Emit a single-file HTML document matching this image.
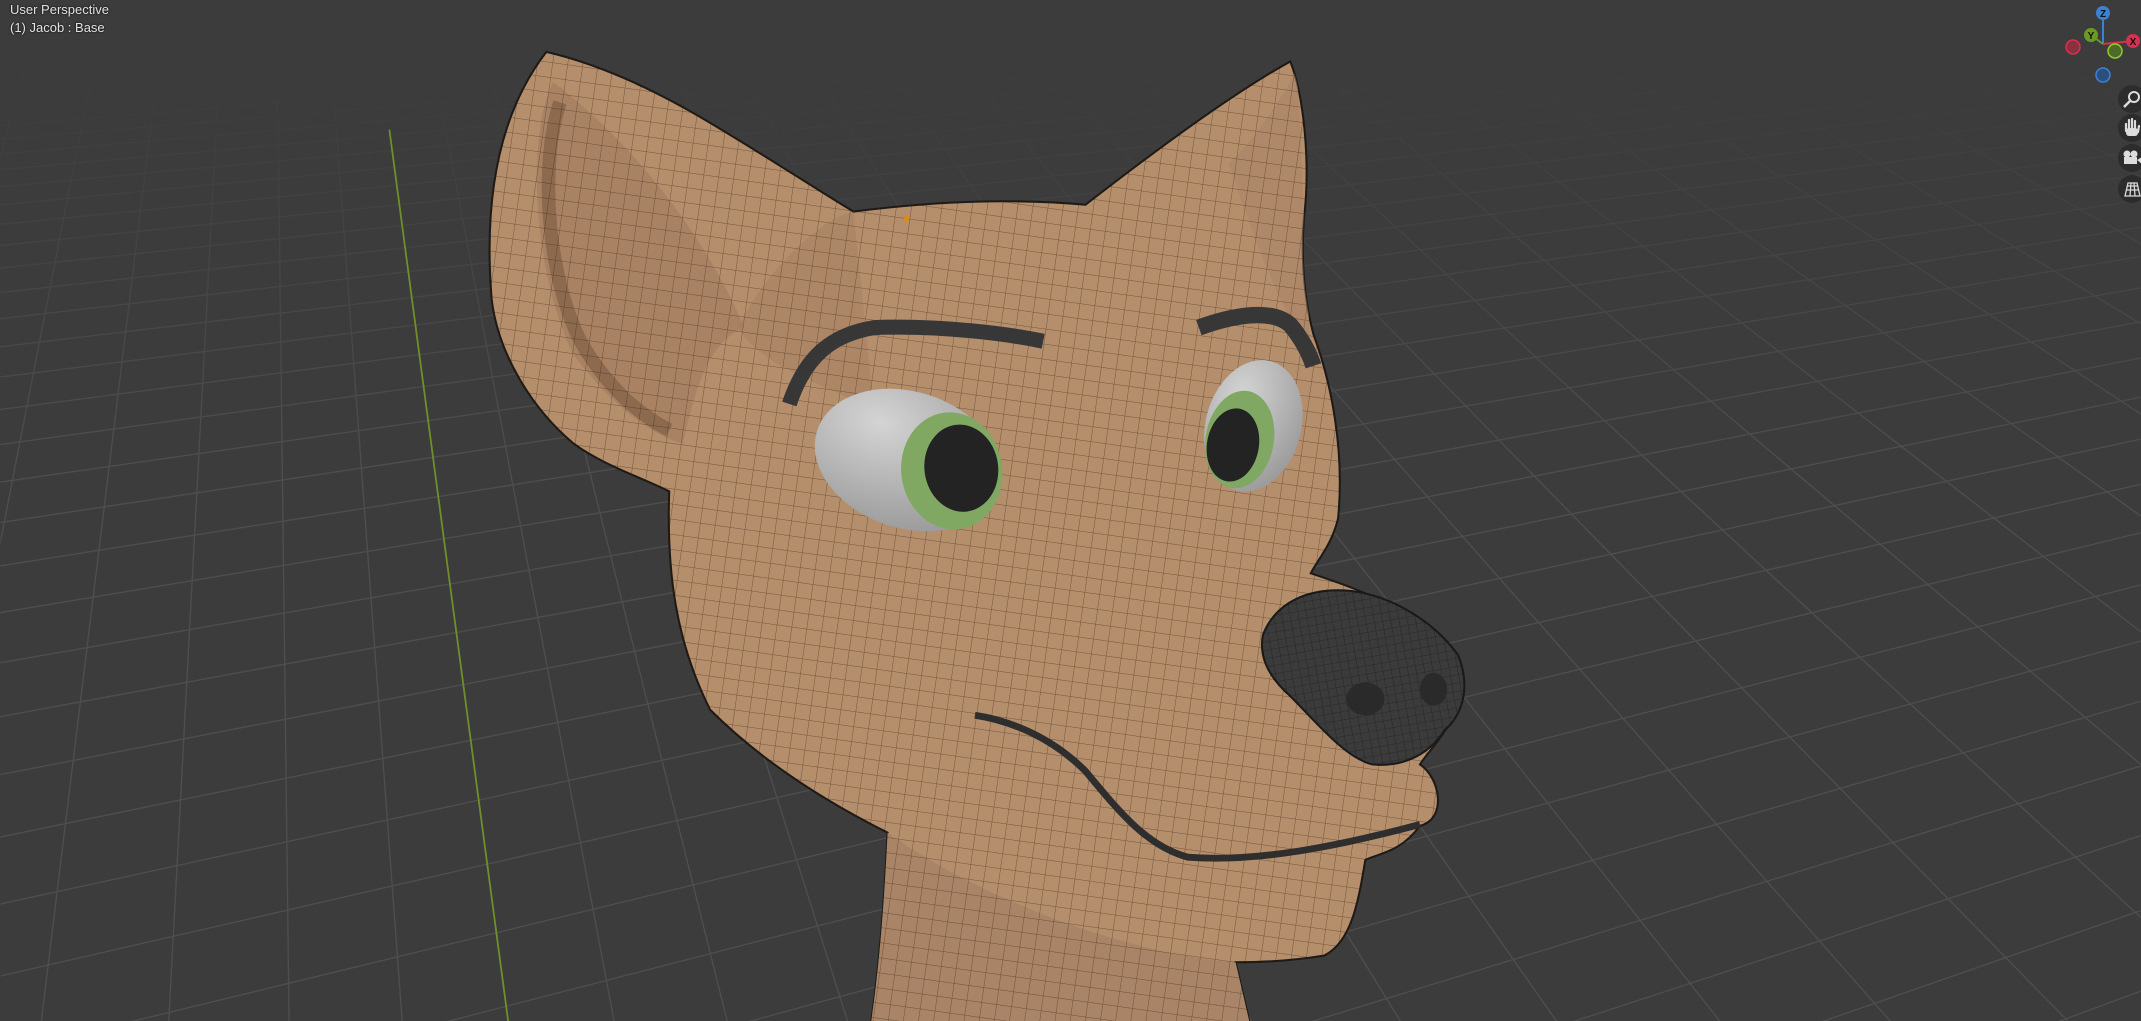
<!DOCTYPE html>
<html><head><meta charset="utf-8">
<style>
html,body{margin:0;padding:0;background:#3c3c3c;overflow:hidden;width:2141px;height:1021px}
#wrap{position:relative;width:2141px;height:1021px;overflow:hidden;background:#3c3c3c}
svg{position:absolute;left:0;top:0;display:block}
.t{position:absolute;left:10px;color:#e2e2e2;font:13px "Liberation Sans",sans-serif;text-shadow:0 0 2px #000}
</style></head><body><div id="wrap">
<svg width="2141" height="1021" viewBox="0 0 1568 748" id="s">
<defs>
<pattern id="mesh" width="11" height="11" patternUnits="userSpaceOnUse" patternTransform="rotate(8)">
<path d="M0 0H11M0 0V11" stroke="#2a1a10" stroke-opacity="0.5" stroke-width="0.7" fill="none"/>
</pattern>
<pattern id="mesh2" width="6" height="6" patternUnits="userSpaceOnUse" patternTransform="rotate(-10)">
<path d="M0 0H6M0 0V6" stroke="#111" stroke-opacity="0.6" stroke-width="0.6" fill="none"/>
</pattern>
<radialGradient id="skin" cx="0.55" cy="0.45" r="0.65">
<stop offset="0" stop-color="#c49d7b"/><stop offset="0.7" stop-color="#b58e6c"/><stop offset="1" stop-color="#93705300"/>
</radialGradient>
<radialGradient id="eyeW" cx="0.3" cy="0.3" r="0.8">
<stop offset="0" stop-color="#d4d4d4"/><stop offset="1" stop-color="#9a9a9a"/>
</radialGradient>
<linearGradient id="fade" x1="0" y1="0" x2="0" y2="1">
<stop offset="0" stop-color="#fff" stop-opacity="0"/><stop offset="0.12" stop-color="#fff" stop-opacity="0.15"/><stop offset="0.45" stop-color="#fff" stop-opacity="1"/><stop offset="1" stop-color="#fff" stop-opacity="1"/>
</linearGradient>
<mask id="gm"><rect x="0" y="0" width="1568" height="748" fill="url(#fade)"/></mask>
<clipPath id="hc"><path id="headp" d="M400,38 C430,45 470,60 520,90 C570,120 600,140 625,155 C680,148 740,145 795,150 C840,115 900,70 945,45 C955,70 960,120 955,160 C952,200 958,230 962,245 C975,280 985,330 980,380 C975,400 965,410 960,420 C990,430 1020,440 1060,470 L1072,500 C1068,530 1050,545 1040,560 C1055,570 1060,600 1040,605 C1025,625 1010,625 1000,630 C995,660 990,690 970,700 C940,705 915,705 905,705 L915,748 L638,748 C645,700 648,650 650,610 C610,590 560,560 520,520 C495,470 488,420 490,360 C470,350 440,340 420,325 C390,300 365,260 360,220 C355,160 360,90 400,38 Z"/></clipPath>
</defs>
<g id="grid" stroke="#4e4e4e" stroke-width="1" fill="none" mask="url(#gm)"></g>
<line x1="285" y1="95" x2="372" y2="748" stroke="#6e8f2c" stroke-width="1.3"/>
<g>
<use href="#headp" fill="#b58e6c" stroke="#1e1a16" stroke-width="1.5"/>
<g clip-path="url(#hc)">
<path d="M405,60 C385,100 390,200 420,260 C450,300 480,320 500,325 C510,280 520,250 545,240 C520,180 470,110 405,60 Z" fill="#a88263"/>
<path d="M410,75 C395,120 400,200 425,250 C445,285 470,305 490,315" stroke="#8d6a4d" stroke-width="10" fill="none"/>
<path d="M650,610 C720,660 830,700 905,705 L915,748 L638,748 Z" fill="#a98466"/>
<path d="M900,120 C930,90 945,60 950,50 L960,260 C940,230 920,180 900,120Z" fill="#a88263" opacity="0.5"/>
<path d="M540,240 C560,200 600,160 625,155 L640,300 C600,280 560,270 540,240Z" fill="#a17b5d" opacity="0.4"/>
<rect x="0" y="0" width="1568" height="748" fill="url(#mesh)"/>
</g>
</g>
<path d="M578,296 C590,260 610,245 640,240 C690,238 740,245 764,250" stroke="#373737" stroke-width="11" fill="none"/>
<path d="M878,240 C900,232 930,225 945,238 C955,250 960,262 962,268" stroke="#373737" stroke-width="12" fill="none"/>
<ellipse cx="665" cy="337" rx="70" ry="50" transform="rotate(18 665 337)" fill="url(#eyeW)"/>
<ellipse cx="697" cy="345" rx="37" ry="43" transform="rotate(-8 697 345)" fill="#80a862"/>
<ellipse cx="704" cy="343" rx="27" ry="32" transform="rotate(-8 704 343)" fill="#232323"/>
<ellipse cx="918" cy="312" rx="35" ry="49" transform="rotate(15 918 312)" fill="url(#eyeW)"/>
<ellipse cx="908" cy="322" rx="25" ry="36" transform="rotate(10 908 322)" fill="#80a862"/>
<ellipse cx="903" cy="326" rx="19" ry="27" transform="rotate(10 903 326)" fill="#232323"/>
<path d="M925,465 C935,440 960,430 990,433 C1020,437 1050,455 1068,480 C1078,505 1070,525 1058,535 C1045,555 1025,562 1005,560 C985,555 965,530 945,510 C928,495 922,480 925,465Z" fill="#3b3b3b" stroke="#1a1a1a" stroke-width="1.5"/>
<path d="M925,465 C935,440 960,430 990,433 C1020,437 1050,455 1068,480 C1078,505 1070,525 1058,535 C1045,555 1025,562 1005,560 C985,555 965,530 945,510 C928,495 922,480 925,465Z" fill="url(#mesh2)"/>
<ellipse cx="1000" cy="512" rx="14" ry="12" fill="#2a2a2a"/>
<ellipse cx="1050" cy="505" rx="10" ry="12" fill="#2a2a2a"/>
<path d="M714,524 C740,528 770,540 795,565 C820,595 840,620 870,628 C920,632 980,620 1040,604" stroke="#2e2e2e" stroke-width="5" fill="none"/>
<circle cx="664" cy="160" r="2" fill="#e08a10"/>
</svg>
<div class="t" style="top:2px">User Perspective</div>
<div class="t" style="top:20px">(1) Jacob : Base</div>
<svg width="2141" height="1021">
<line x1="2103" y1="13" x2="2103" y2="44" stroke="#3b82d6" stroke-width="2"/>
<line x1="2103" y1="44" x2="2133" y2="41" stroke="#d8304e" stroke-width="2"/>
<line x1="2103" y1="44" x2="2091" y2="35" stroke="#6a9a20" stroke-width="2"/>
<circle cx="2073" cy="47" r="7" fill="#8a3040" stroke="#d8304e" stroke-width="1.5"/>
<circle cx="2103" cy="75" r="7" fill="#2a4e80" stroke="#3b82d6" stroke-width="1.5"/>
<circle cx="2115" cy="51" r="7" fill="#4e6a2a" stroke="#8ccc2a" stroke-width="1.5"/>
<circle cx="2103" cy="13" r="7" fill="#3b82d6"/>
<circle cx="2091" cy="35" r="7" fill="#6a9a20"/>
<circle cx="2133" cy="41" r="7" fill="#d8304e"/>
<text x="2103" y="17" font-family="Liberation Sans" font-weight="bold" font-size="10" text-anchor="middle" fill="#111">Z</text>
<text x="2091" y="39" font-family="Liberation Sans" font-weight="bold" font-size="10" text-anchor="middle" fill="#111">Y</text>
<text x="2133" y="45" font-family="Liberation Sans" font-weight="bold" font-size="10" text-anchor="middle" fill="#111">X</text>
<g fill="#2c2c2c"><circle cx="2132" cy="99" r="14"/><circle cx="2132" cy="128" r="14"/><circle cx="2132" cy="158" r="14"/><circle cx="2132" cy="189" r="14"/></g>
<g fill="#dcdcdc" stroke="#dcdcdc">
<circle cx="2134" cy="97" r="5" fill="none" stroke-width="2"/><line x1="2130" y1="101" x2="2124" y2="107" stroke-width="2.5"/>
<path d="M2126 131 L2126 124 M2129 130 L2129 120 M2132 130 L2132 119 M2135 130 L2135 121 M2138 132 L2139 126" stroke-width="2.2" stroke-linecap="round"/>
<rect x="2126" y="128" width="12" height="8" rx="3" stroke="none"/>
<circle cx="2127" cy="154" r="3.5" stroke="none"/><circle cx="2134" cy="154" r="3.5" stroke="none"/><rect x="2124" y="157" width="13" height="7" stroke="none"/><path d="M2137 160 L2142 157 L2142 164Z" stroke="none"/>
<path d="M2125 196 L2128 183 L2137 183 L2140 196 Z M2126 190 H2139 M2127 186 H2138 M2131 183 L2130 196 M2134 183 L2135 196" fill="none" stroke-width="1.3"/>
</g>
</svg>
</div>
<script>
(function(){
var g=document.getElementById('grid');var ns='http://www.w3.org/2000/svg';
function L(x1,y1,x2,y2){var l=document.createElementNS(ns,'line');l.setAttribute('x1',x1);l.setAttribute('y1',y1);l.setAttribute('x2',x2);l.setAttribute('y2',y2);g.appendChild(l);}
var vx=195,vy=-600;
for(var k=-18;k<=34;k++){ if(k==0)continue; var xb=372+k*75*(1+Math.abs(k)*0.035); L(vx,vy,vx+(xb-vx)*3,vy+(748-vy)*3);}
var ux=4200,uy=-250;
var y=92,d=10;
for(var i=0;i<50;i++){ L(ux,uy,ux+(0-ux)*1.2,uy+(y-uy)*1.2); y+=d; d*=1.075; if(y>2500)break;}
})();
</script>
</body></html>
